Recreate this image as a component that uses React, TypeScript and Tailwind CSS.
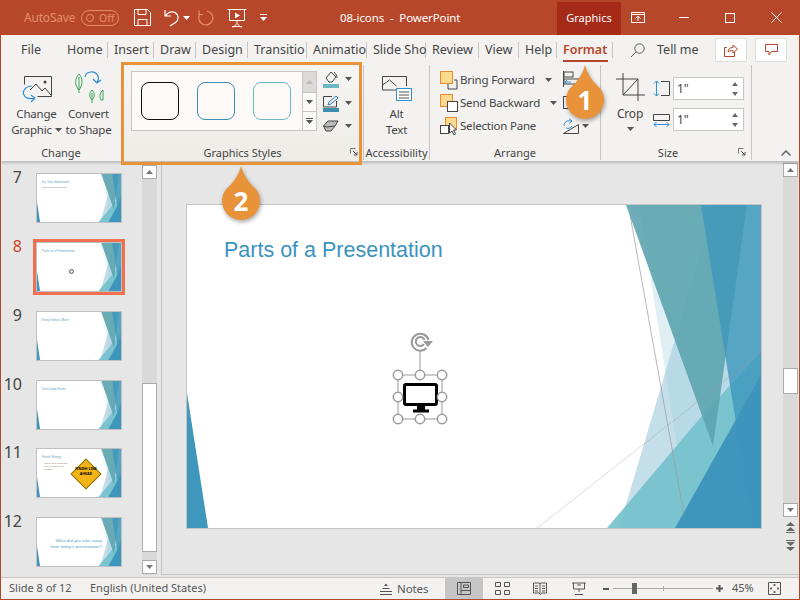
import type { ReactNode } from 'react';

// the last three labels are cut short in the ribbon, same as the window this copies
const TABS = [
  { label: 'Home', w: 'w-[47px]' },
  { label: 'Insert', w: 'w-[46px]' },
  { label: 'Draw', w: 'w-[42px]' },
  { label: 'Design', w: 'w-[52px]' },
  { label: 'Transitio', w: 'w-[59px]' },
  { label: 'Animatio', w: 'w-[60px]' },
  { label: 'Slide Sho', w: 'w-[59px]' },
  { label: 'Review', w: 'w-[53px]' },
  { label: 'View', w: 'w-[40px]' },
  { label: 'Help', w: 'w-[38px]' },
];

const THUMBS = [
  { n: 7, title: 'Do Your Homework', sub: 'Know your main audience' },
  { n: 8, title: 'Parts of a Presentation', mini: true },
  { n: 9, title: 'Keep Videos Short' },
  { n: 10, title: 'Use Large Fonts' },
  { n: 11, title: 'Finish Strong', sign: true },
  { n: 12, closing: true },
];

function Caret({ className = '', fill = '#555' }: { className?: string; fill?: string }) {
  return (
    <svg width="7" height="4" viewBox="0 0 7 4" className={className}>
      <path d="M0 0h7L3.500 4z" fill={fill} />
    </svg>
  );
}

function SlideArt() {
  return (
    <svg viewBox="0 0 574 323" preserveAspectRatio="none" className="block w-full h-full">
      <rect width="574" height="323" fill="#fff" />
      <polygon points="0,188 21,323 0,323" fill="#3f97bd" />
      <polygon points="452,0 574,0 574,323 503,323" fill="#dbecf2" opacity="0.85" />
      <polygon points="432,323 528,0 574,0 574,323" fill="#9ccadc" opacity="0.6" />
      <polygon points="420,323 514,212 574,147 574,323" fill="#73c1cc" opacity="0.9" />
      <polygon points="439,0 560,0 526,241" fill="#5ca4af" opacity="0.9" />
      <polygon points="514,0 574,0 574,323 566,323" fill="#3f97bd" opacity="0.8" />
      <polygon points="488,323 574,170 574,323" fill="#3c94bc" opacity="0.95" />
      <line x1="443" y1="10" x2="497" y2="310" stroke="#9a9a9a" strokeOpacity="0.7" strokeWidth="1" />
      <line x1="350" y1="323" x2="574" y2="147" stroke="#999" strokeOpacity="0.35" strokeWidth="1" />
    </svg>
  );
}

function Thumb({ t }: { t: (typeof THUMBS)[number] }) {
  const active = t.n === 8;
  return (
    <div className="flex h-[50px] shrink-0">
      <div className={`w-[21px] text-right text-[16px] leading-[9px] ${active ? 'text-[#c8452a]' : 'text-[#444]'}`}>
        {t.n}
      </div>
      <div
        className={`relative ml-[14px] w-[86px] h-[50px] border border-[#bfbfbf] bg-white ${
          active ? 'outline-3 outline-[#f0704f]' : ''
        }`}
      >
        <SlideArt />
        {t.title && (
          <span className="absolute left-[5px] top-[6px] text-[3.200px] leading-[5px] text-[#5a9fc4] font-['Liberation_Sans',sans-serif] whitespace-nowrap">
            {t.title}
          </span>
        )}
        {t.sub && (
          <span className="absolute left-[5px] top-[12px] text-[2px] leading-[3px] text-[#777] whitespace-nowrap">
            {t.sub}
          </span>
        )}
        {t.mini && (
          <span className="absolute left-[32px] top-[26px] w-[5px] h-[5px] rounded-full border border-[#666] bg-[#ddd]" />
        )}
        {t.sign && (
          <>
            <span className="absolute left-[7px] top-[13px] w-[24px] text-[2.400px] leading-[2.600px] text-[#8a7a60]">
              Leave your audience with a strong final thought
            </span>
            <span className="absolute left-[38px] top-[14px] w-[22px] h-[22px] rotate-45 bg-[#f3b417] border border-[#8a6a10]" />
            <span className="absolute left-[38px] top-[18px] w-[22px] text-center text-[3.600px] leading-[4.400px] font-bold text-black">
              FINISH LINE AHEAD
            </span>
          </>
        )}
        {t.closing && (
          <span className="absolute left-[5px] top-[20px] w-[60px] text-right text-[4.400px] leading-[6px] text-[#5a9fc4] font-['Liberation_Sans',sans-serif] whitespace-nowrap">
            What did you take away
            <br />
            from today's presentation?
          </span>
        )}
      </div>
    </div>
  );
}

function ScrollBtn({ up }: { up?: boolean }) {
  return (
    <div className="w-[15px] h-[14px] shrink-0 bg-white border border-[#ababab] flex items-center justify-center">
      <svg width="7" height="4" viewBox="0 0 7 4">
        <path d={up ? 'M0 4h7L3.500 0z' : 'M0 0h7L3.500 4z'} fill="#777" />
      </svg>
    </div>
  );
}

function Group({
  label,
  w,
  children,
  expander,
  className = '',
  labelClass = '',
}: {
  label: string;
  w: string;
  children: ReactNode;
  expander?: boolean;
  className?: string;
  labelClass?: string;
}) {
  return (
    <div className={`relative flex flex-col shrink-0 ${w} ${className}`}>
      <div className="flex-1 flex min-h-0">{children}</div>
      <div className={`h-[16px] text-center text-[11px] leading-[16px] text-[#444] whitespace-nowrap ${labelClass}`}>{label}</div>
      {expander && (
        <svg width="8" height="8" viewBox="0 0 8 8" className="absolute right-[5px] bottom-[5px]">
          <path d="M.5 .5h5M.5 .5v5" stroke="#777" fill="none" />
          <path d="M3 3l4 4M7 4v3H4" stroke="#555" fill="none" />
        </svg>
      )}
    </div>
  );
}

function Sep() {
  return <div className="w-px my-[3px] mb-[1px] bg-[#c8c6c4] shrink-0" />;
}

function Callout({ n, className }: { n: number; className: string }) {
  return (
    <div className={`absolute w-[44px] h-[60px] ${className}`}>
      <svg width="44" height="60" viewBox="0 0 44 60" className="drop-shadow-[1px_2px_2px_rgba(0,0,0,0.35)]">
        <path d="M22 1C24 9 28 15 33 20.500A19 19 0 1 1 11 20.500C16 15 20 9 22 1z" fill="#e8923a" />
      </svg>
      <span className="absolute left-0 top-[19px] w-[44px] text-center text-[26px] leading-[34px] font-bold text-white font-['Open_Sans',sans-serif]">
        {n}
      </span>
    </div>
  );
}

function Spinner() {
  return (
    <div className="flex items-center w-[71px] h-[23px] bg-white border border-[#c8c6c4] pl-[3px]">
      <span className="flex-1 text-[12px] text-[#444]">1"</span>
      <div className="w-[16px] flex flex-col gap-[6px] items-center">
        <svg width="6" height="4" viewBox="0 0 6 4"><path d="M0 4h6L3 0z" fill="#666" /></svg>
        <svg width="6" height="4" viewBox="0 0 6 4"><path d="M0 0h6L3 4z" fill="#666" /></svg>
      </div>
    </div>
  );
}

function ArrangeRow({ label, caret, icon }: { label: string; caret?: boolean; icon: ReactNode }) {
  return (
    <div className="flex items-center h-[23px]">
      <div className="w-[20px] h-[20px] shrink-0">{icon}</div>
      <span className="text-[11.500px] tracking-[-0.2px] text-[#444] whitespace-nowrap">{label}</span>
      {caret && <Caret className="ml-[10px]" />}
    </div>
  );
}

export default function App() {
  return (
    <div className="w-[800px] h-[600px] relative overflow-hidden flex flex-col bg-[#e6e6e6] border-x border-b border-[#b7472a] font-['Noto_Sans',sans-serif] text-[#444]">
      {/* title bar */}
      <div className="h-[35px] shrink-0 -mx-px bg-[#b7472a] flex items-center text-white">
        <span className="ml-[24px] w-[50px] text-[12px] tracking-[-0.2px] text-[#e58c6f] whitespace-nowrap">AutoSave</span>
        <div className="ml-[7px] w-[38px] h-[16px] rounded-full border border-[#e58c6f] flex items-center pl-[4px] gap-[5px]">
          <span className="w-[8px] h-[8px] rounded-full border border-[#e58c6f]" />
          <span className="text-[10.500px] leading-[14px] text-[#e58c6f]">Off</span>
        </div>
        <svg width="17" height="17" viewBox="0 0 17 17" className="ml-[15px]" fill="none" stroke="#fff">
          <path d="M.5 .5h13l3 3v13H.5zM4 .5v5h8v-5M4 16.500v-6h9v6" />
        </svg>
        <svg width="16" height="18" viewBox="0 0 16 18" className="ml-[13px]" fill="none" stroke="#fff" strokeWidth="1.200">
          <path d="M1 1v6h6M1.500 7C4 3 8 2 11 3.500c4 2.500 4 7.500 .5 10L6 17" />
        </svg>
        <Caret className="ml-[3px]" fill="#fff" />
        <svg width="16" height="16" viewBox="0 0 16 16" className="ml-[8px]" fill="none" stroke="#e58c6f" strokeWidth="1.200">
          <path d="M9 1a7 7 0 1 1-7 3M1 .5v4h4" />
        </svg>
        <svg width="20" height="20" viewBox="0 0 20 20" className="ml-[13px]" fill="none" stroke="#fff">
          <path d="M.5 1.500h19M2.500 1.500v11h15v-11M10 12.500v3M6 19.500l4-4 4 4M5 18.500h10" />
          <path d="M8 4.500l5 3-5 3z" fill="#fff" stroke="none" />
        </svg>
        <svg width="7" height="8" viewBox="0 0 7 8" className="ml-[13px]">
          <path d="M0 0h7v1H0zM0 3h7L3.500 7z" fill="#fff" />
        </svg>
        <span className="ml-[73px] w-[126px] text-[11.500px] tracking-[-0.1px] whitespace-nowrap">08-icons&nbsp; -&nbsp; PowerPoint</span>
        <div className="ml-[91px] self-end w-[64px] h-[33px] bg-[#a52a18] text-center text-[11px] leading-[32px]">Graphics</div>
        <svg width="14" height="11" viewBox="0 0 14 11" className="ml-[10px]" fill="none" stroke="#fff">
          <path d="M.5 .5h13v10H.5zM.5 2.500h13M7 9V4.500M4.500 6.500L7 4l2.500 2.500" />
        </svg>
        <div className="ml-[34px] w-[10px] h-px bg-white" />
        <div className="ml-[36px] w-[10px] h-[10px] border border-white" />
        <svg width="11" height="11" viewBox="0 0 11 11" className="ml-[36px]" stroke="#fff">
          <path d="M.5 .5l10 10M10.500 .5l-10 10" />
        </svg>
      </div>

      {/* tab row */}
      <div className="h-[27px] shrink-0 bg-[#f3f2f1] flex items-center pt-[3px] text-[12.500px] leading-[16px]">
        <span className="ml-[20px] w-[40px]">File</span>
        {TABS.map((t) => (
          <div key={t.label} className={`${t.w} h-[16px] shrink-0 border-r border-[#c8c6c4] pl-[6px] whitespace-nowrap`}>
            {t.label}
          </div>
        ))}
        <div className="w-[56px] h-[16px] border-r border-[#c8c6c4] pl-[6px] text-[#b7472a] font-semibold">
          Format
        </div>
        <svg width="15" height="15" viewBox="0 0 15 15" className="ml-[17px]" fill="none" stroke="#555">
          <circle cx="9.500" cy="5.500" r="4.700" />
          <path d="M6 9l-5 5" />
        </svg>
        <span className="ml-[12px] w-[58px]">Tell me</span>
        <div className="w-[32px] h-[24px] rounded-[2px] bg-white border border-[#e1dfdd] flex items-center justify-center">
          <svg width="14" height="14" viewBox="0 0 14 14" fill="none" stroke="#b7472a">
            <path d="M3 4.500H.5v9h10V9M4 9c0-3 2-4.500 5-4.500V2l4.500 4L9 10V7.500C7 7.500 5 8 4 9z" />
          </svg>
        </div>
        <div className="ml-[8px] w-[32px] h-[24px] rounded-[2px] bg-white border border-[#e1dfdd] flex items-center justify-center">
          <svg width="13" height="12" viewBox="0 0 13 12" fill="none" stroke="#b7472a">
            <path d="M.5 .5h12v7H6.500L4 11V7.500H.5z" />
          </svg>
        </div>
      </div>
      <div className="absolute left-[562px] top-[60px] w-[45px] h-[2px] bg-[#b7472a]" />

      {/* ribbon */}
      <div className="h-[99px] shrink-0 bg-[#f3f2f1] flex shadow-[0_2px_3px_rgba(0,0,0,0.2)] z-10 relative">
        <Group label="Change" w="w-[120px]">
          <div className="w-[65px] pl-[6px] pt-[14px] flex flex-col items-center text-[11.500px] tracking-[-0.2px] leading-[16px]">
            <svg width="30" height="28" viewBox="0 0 30 28" fill="none" className="mb-[2px]">
              <path d="M2.500 .5h27v20h-14" stroke="#444" />
              <path d="M2.500 .5v8M8 14l6-6 6 7 3-3 6 7" stroke="#444" />
              <circle cx="23" cy="6" r="1.500" fill="#444" />
              <path d="M10 10C3 10 0 16 2 19c2 4 7 4 11 3M9 19l4 3-4 4" stroke="#2f8fd8" strokeWidth="1.200" />
            </svg>
            <span>Change</span>
            <span className="flex items-center gap-[3px] whitespace-nowrap">Graphic <Caret /></span>
          </div>
          <div className="w-[45px] pt-[9px] flex flex-col items-center text-[11.500px] tracking-[-0.2px] leading-[16px]">
            <svg width="30" height="32" viewBox="0 0 30 32" fill="none" className="mb-[3px]">
              <path d="M5 3C1 7 0 14 5 19c4-5 4-12 0-16zM5 6v16" stroke="#3aa356" />
              <path d="M18 19c-3 3-3 7 0 10 3-3 3-7 0-10zM18 22v10M29 19c-3 2-4 7-2 10h2z" stroke="#3aa356" />
              <path d="M11 6c1-6 10-7 13-1 1 3 0 5-1 6M19 8l4 4 4-3" stroke="#2f8fd8" strokeWidth="1.200" />
            </svg>
            <span>Convert</span>
            <span className="whitespace-nowrap">to Shape</span>
          </div>
        </Group>
        <Sep />
        <Group label="Graphics Styles" w="w-[241px]" expander className="bg-gradient-to-b from-[#f6f5f3] to-[#efece7]">
          <div className="ml-[9px] mt-[9px] w-[186px] h-[60px] flex border border-[#c8c6c4] bg-[#fcf9f6]">
            <div className="flex-1 flex items-center gap-[18px] pl-[9px]">
              <div className="w-[38px] h-[38px] rounded-[8px] border border-[#111]" />
              <div className="w-[38px] h-[38px] rounded-[8px] border border-[#3d8fb8]" />
              <div className="w-[38px] h-[38px] rounded-[8px] border border-[#6bb8c4]" />
            </div>
            <div className="w-[14px] flex flex-col border-l border-[#c8c6c4]">
              <div className="h-[21px] bg-[#dcdad7] flex items-center justify-center border-b border-[#c8c6c4]">
                <svg width="7" height="4" viewBox="0 0 7 4"><path d="M0 4h7L3.500 0z" fill="#bbb" /></svg>
              </div>
              <div className="h-[19px] flex items-center justify-center border-b border-[#c8c6c4]"><Caret /></div>
              <div className="flex-1 flex flex-col items-center justify-center gap-[1px]">
                <div className="w-[7px] h-px bg-[#555]" />
                <Caret />
              </div>
            </div>
          </div>
          <div className="ml-[6px] mt-[7px] flex flex-col gap-[4px]">
            <div className="flex items-center gap-[6px] h-[20px]">
              <div className="w-[16px]">
                <svg width="16" height="13" viewBox="0 0 16 13" fill="none" stroke="#444" className="block">
                  <path d="M3 7l5-6 5 5-4 5H6zM11 1c2 2 3 4 3 6" />
                </svg>
                <div className="h-[4px] bg-[#6ab9c3]" />
              </div>
              <Caret />
            </div>
            <div className="flex items-center gap-[6px] h-[20px]">
              <div className="w-[16px]">
                <svg width="16" height="13" viewBox="0 0 16 13" fill="none" className="block">
                  <path d="M9 1.500H.5V12h13V6" stroke="#444" />
                  <path d="M5 10l1-3 7-6 2 2-7 6z" stroke="#2f7fb8" />
                </svg>
                <div className="h-[4px] bg-[#3d8fb0]" />
              </div>
              <Caret />
            </div>
            <div className="flex items-center gap-[6px] h-[18px]">
              <svg width="16" height="12" viewBox="0 0 16 12" fill="#bbb" stroke="#444">
                <path d="M.5 6L5 1h10l-3 5-4 5H3z" />
                <path d="M.5 6l3 1 8-1" fill="none" />
              </svg>
              <Caret />
            </div>
          </div>
        </Group>
        <Sep />
        <Group label="Accessibility" w="w-[65px]">
          <div className="flex-1 pt-[14px] flex flex-col items-center text-[11.500px] tracking-[-0.2px] leading-[16px]">
            <svg width="30" height="30" viewBox="0 0 30 30" fill="none">
              <path d="M18 14H.5V.5h24V10" stroke="#444" />
              <path d="M.5 9l7-5 7 6" stroke="#444" />
              <rect x="14.500" y="12.500" width="15" height="12" fill="#fff" stroke="#2f8fd8" />
              <path d="M17 16h10M17 19h10M17 22h10" stroke="#555" />
            </svg>
            <span>Alt</span>
            <span>Text</span>
          </div>
        </Group>
        <Sep />
        <Group label="Arrange" w="w-[170px]">
          <div className="ml-[10px] mt-[6px] w-[123px] flex flex-col shrink-0">
            <ArrangeRow
              label="Bring Forward"
              caret
              icon={
                <svg width="20" height="20" viewBox="0 0 20 20" fill="none">
                  <path d="M8 13v6h9v-9h-3" stroke="#444" />
                  <rect x=".5" y="1.500" width="12" height="12" fill="#fbd98d" stroke="#ea8a2e" />
                </svg>
              }
            />
            <ArrangeRow
              label="Send Backward"
              caret
              icon={
                <svg width="20" height="20" viewBox="0 0 20 20" fill="none">
                  <rect x=".5" y="1.500" width="12" height="12" fill="#fbd98d" stroke="#ea8a2e" />
                  <rect x="7.500" y="8.500" width="10" height="10" fill="#fff" stroke="#444" />
                </svg>
              }
            />
            <ArrangeRow
              label="Selection Pane"
              icon={
                <svg width="20" height="20" viewBox="0 0 20 20" fill="none">
                  <rect x="5.500" y="1.500" width="11" height="11" fill="#fbd98d" stroke="#ea8a2e" />
                  <rect x=".5" y="9.500" width="8" height="8" fill="#fff" stroke="#444" />
                  <path d="M9.500 7v10l2.500-2 2 4 1.500-1-2-4h3z" fill="#fff" stroke="#444" />
                </svg>
              }
            />
          </div>
          <div className="mt-[9px] flex flex-col gap-[8px]">
            <svg width="17" height="17" viewBox="0 0 17 17" fill="none">
              <path d="M.5 0v16" stroke="#444" />
              <rect x="1" y="1" width="9" height="5" stroke="#444" />
              <rect x="1" y="8" width="15" height="5" stroke="#444" />
              <path d="M8 11h-6M4 9l-2 2 2 2" stroke="#2f8fd8" />
            </svg>
            <svg width="17" height="17" viewBox="0 0 17 17" fill="none" stroke="#444">
              <rect x=".5" y=".5" width="10" height="12" />
            </svg>
            <div className="flex items-center gap-[2px] -mt-[3px]">
              <svg width="17" height="16" viewBox="0 0 17 16" fill="none">
                <path d="M.5 15.500h15v-9z" stroke="#444" />
                <path d="M1 8c0-4 3-6 7-5M6 .5L9 3 6 5.500M9 8c-1 2-4 3-6 2" stroke="#2f8fd8" />
              </svg>
              <Caret />
            </div>
          </div>
        </Group>
        <Sep />
        <Group label="Size" w="w-[150px]" expander labelClass="pr-[16px]">
          <div className="w-[52px] shrink-0 pl-[6px] pt-[11px] flex flex-col items-center text-[12px] tracking-[-0.2px]">
            <svg width="29" height="28" viewBox="0 0 29 28" fill="none" stroke="#444">
              <path d="M7 0v22h22M0 6h22v22M7 22L22 6" />
            </svg>
            <span className="mt-[5px] leading-[16px]">Crop</span>
            <Caret className="mt-[5px]" />
          </div>
          <div className="mt-[15px] flex flex-col gap-[8px]">
            <div className="flex items-center gap-[3px]">
              <svg width="17" height="17" viewBox="0 0 17 17" fill="none">
                <path d="M3.500 1v15M1 3.500L3.500 1 6 3.500M1 13.500L3.500 16 6 13.500" stroke="#2f8fd8" />
                <path d="M8 1.500h8.500v14H8" stroke="#444" />
              </svg>
              <Spinner />
            </div>
            <div className="flex items-center gap-[3px]">
              <svg width="17" height="17" viewBox="0 0 17 17" fill="none">
                <path d="M.5 3.500h16v6H.5z" stroke="#444" />
                <path d="M1 13.500h15M3.500 11L1 13.500 3.500 16M13.500 11L16 13.500 13.500 16" stroke="#2f8fd8" />
              </svg>
              <Spinner />
            </div>
          </div>
        </Group>
        <Sep />
        <div className="flex-1 relative">
          <svg width="10" height="6" viewBox="0 0 10 6" fill="none" stroke="#666" strokeWidth="1.500" className="absolute right-[8px] bottom-[5px]">
            <path d="M.5 5.500L5 1l4.500 4.500" />
          </svg>
        </div>
      </div>

      {/* workspace */}
      <div className="flex-1 min-h-0 flex pb-[2px]">
        <div className="w-[141px] shrink-0 overflow-hidden pt-[12px] flex flex-col gap-[18.850px]">
          {THUMBS.map((t) => (
            <Thumb key={t.n} t={t} />
          ))}
        </div>
        <div className="w-[15px] shrink-0 bg-[#d9d9d9] flex flex-col pt-[4px] pb-[1px]">
          <ScrollBtn up />
          <div className="h-[204px] shrink-0" />
          <div className="h-[169px] shrink-0 bg-white border border-[#ababab]" />
          <div className="flex-1" />
          <ScrollBtn />
        </div>
        <div className="w-[5px] shrink-0 border-r border-[#c4c4c4]" />
        <div className="flex-1 min-w-0 border-b border-[#c8c6c4] pl-[25px] pr-[22px] pt-[44px] -mr-[16px]">
          <div className="relative w-[574px] h-[323px] shadow-[0_0_0_1px_#c4c4c4]">
            <SlideArt />
            <h1 className="absolute left-[37px] top-[31px] text-[21.500px] leading-[28px] text-[#3a94bf] font-['Liberation_Sans',sans-serif] whitespace-nowrap">
              Parts of a Presentation
            </h1>
            <svg width="62" height="96" viewBox="0 0 62 96" fill="none" className="absolute left-[202px] top-[125px]">
              <path d="M31 21v24M9 45h44v44H9z" stroke="#999" strokeWidth="1" />
              <path d="M37.500 18a8.500 8.500 0 1 1 2-8" stroke="#999" strokeWidth="2" />
              <path d="M35 14a4.500 4.500 0 1 1 .5-4" stroke="#999" strokeWidth="2" />
              <path d="M34 11h10l-5 6z" fill="#999" />
              <rect x="15.500" y="54.500" width="32" height="20" rx="1.500" fill="#fff" stroke="#000" strokeWidth="3" />
              <path d="M28 76h8v4h-8zM24 79.500h16v3H24z" fill="#000" />
              {[[9, 45], [31, 45], [53, 45], [9, 67], [53, 67], [9, 89], [31, 89], [53, 89]].map(([cx, cy]) => (
                <circle key={`${cx}-${cy}`} cx={cx} cy={cy} r="4.700" fill="#fff" stroke="#999" strokeWidth="1.500" />
              ))}
            </svg>
          </div>
        </div>
        <div className="relative w-[15px] shrink-0 mr-[1px] flex flex-col items-center pt-[1px]">
          <div className="bg-[#d9d9d9] w-[15px] flex flex-col pt-[1px]">
            <ScrollBtn up />
            <div className="h-[191px] shrink-0" />
            <div className="w-[15px] h-[26px] shrink-0 bg-white border border-[#ababab]" />
            <div className="h-[109px] shrink-0" />
            <ScrollBtn />
          </div>
          <svg width="9" height="11" viewBox="0 0 9 11" className="mt-[5px]"><path d="M4.500 0L9 4H0zM4.500 5L9 9H0zM0 10h9v1H0z" fill="#666" /></svg>
          <svg width="9" height="11" viewBox="0 0 9 11" className="mt-[7px]"><path d="M0 0h9v1H0zM0 2h9L4.500 6zM0 7h9l-4.500 4z" fill="#666" /></svg>
        </div>
      </div>

      {/* status bar */}
      <div className="h-[22px] shrink-0 bg-[#f3f2f1] border-t border-[#c8c6c4] flex items-center text-[11px] text-[#555]">
        <span className="ml-[8px] w-[81px] whitespace-nowrap">Slide 8 of 12</span>
        <span className="w-[290px] whitespace-nowrap">English (United States)</span>
        <svg width="12" height="12" viewBox="0 0 12 12" className="shrink-0" stroke="#555">
          <path d="M4 3h4L6 .5z" fill="#555" stroke="none" />
          <path d="M2.500 5.500h7M0 8.500h12M0 11.500h12" />
        </svg>
        <span className="ml-[5px] w-[48px] text-[11.500px] tracking-[-0.1px]">Notes</span>
        <div className="w-[38px] h-[21px] bg-[#c6c6c6] flex items-center justify-center">
          <svg width="14" height="13" viewBox="0 0 14 13" fill="none" stroke="#555"><path d="M.5 .5h13v12H.5zM4 .5v12M4 8.500h9.500M6.500 3h5v2.500h-5z" /></svg>
        </div>
        <svg width="15" height="13" viewBox="0 0 15 13" fill="none" stroke="#555" className="ml-[12px]"><path d="M.5 .5h5v4h-5zM9.500 .5h5v4h-5zM.5 8.500h5v4h-5zM9.500 8.500h5v4h-5z" /></svg>
        <svg width="14" height="13" viewBox="0 0 14 13" fill="none" stroke="#555" className="ml-[23px]"><path d="M.5 1h6l.5 1 .5-1h6v10h-5l-1 1.500L6 11H.5zM7 2v9M2 4h3M2 6.500h3M2 9h3M9 4h3M9 6.500h3M9 9h3" /></svg>
        <svg width="14" height="13" viewBox="0 0 14 13" fill="none" stroke="#555" className="ml-[25px]"><path d="M0 1h14M1.500 1v6h11V1M7 7v3M3 12.500h8M5 3h4" /></svg>
        <div className="ml-[17px] w-[6px] h-[2px] bg-[#555]" />
        <div className="ml-[4px] w-[100px] h-px bg-[#aaa] relative">
          <div className="absolute left-[19px] -top-[5px] w-[5px] h-[11px] bg-[#666]" />
          <div className="absolute left-[50px] -top-[2px] w-px h-[5px] bg-[#aaa]" />
        </div>
        <svg width="7" height="7" viewBox="0 0 7 7" className="ml-[3px]" stroke="#555" strokeWidth="2"><path d="M0 3.500h7M3.500 0v7" /></svg>
        <span className="ml-[9px] w-[22px]">45%</span>
        <svg width="13" height="13" viewBox="0 0 13 13" fill="none" stroke="#555" className="ml-[14px]"><path d="M.5 .5h12v12H.5z" /><path d="M6.500 2v2M5 3h3M6.500 9v2M5 10h3M2 6.500h2M3 5v3M9 6.500h2M10 5v3" strokeWidth="0.800" /></svg>
      </div>

      {/* orange highlight and numbered callouts */}
      <div className="absolute left-[120px] top-[62px] w-[241px] h-[103px] border-[3px] border-[#e8923a] pointer-events-none z-20" />
      <Callout n={1} className="left-[562px] top-[64px] z-20" />
      <Callout n={2} className="left-[218px] top-[165px] z-20" />
    </div>
  );
}
